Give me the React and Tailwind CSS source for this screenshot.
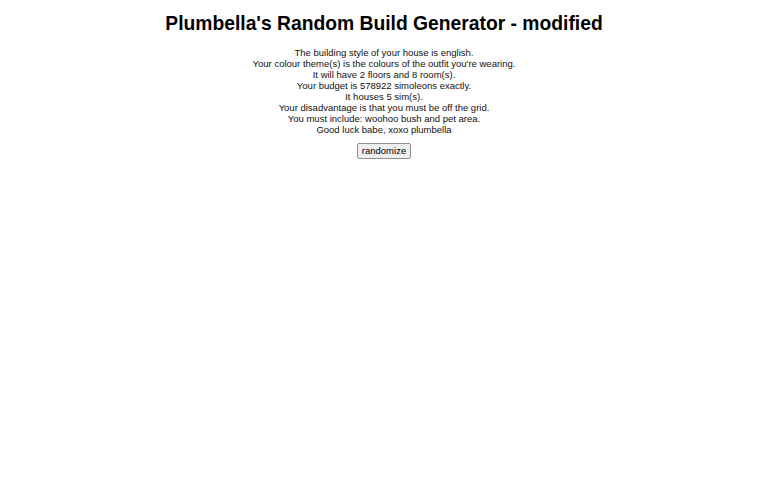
export default function App() {
  const lines = [
    'The building style of your house is english.',
    "Your colour theme(s) is the colours of the outfit you're wearing.",
    'It will have 2 floors and 8 room(s).',
    'Your budget is 578922 simoleons exactly.',
    'It houses 5 sim(s).',
    'Your disadvantage is that you must be off the grid.',
    'You must include: woohoo bush and pet area.',
    'Good luck babe, xoxo plumbella',
  ];

  return (
    <div className="min-h-[480px] w-full bg-white text-center text-black font-['Liberation_Sans',Arial,sans-serif]">
      <h1 className="pt-[12px] text-[19.3px] font-bold leading-6">
        Plumbella's Random Build Generator - modified
      </h1>
      <div className="mt-[11px] text-[9.5px] leading-[11px] text-[#111]">
        {lines.map((line) => (
          <p key={line}>{line}</p>
        ))}
      </div>
      <button className="mt-[8px] h-[16px] rounded-[2px] border border-[#8f8f8f] bg-[#efefef] px-[4px] text-[9.5px] leading-[14px]">
        randomize
      </button>
    </div>
  );
}
